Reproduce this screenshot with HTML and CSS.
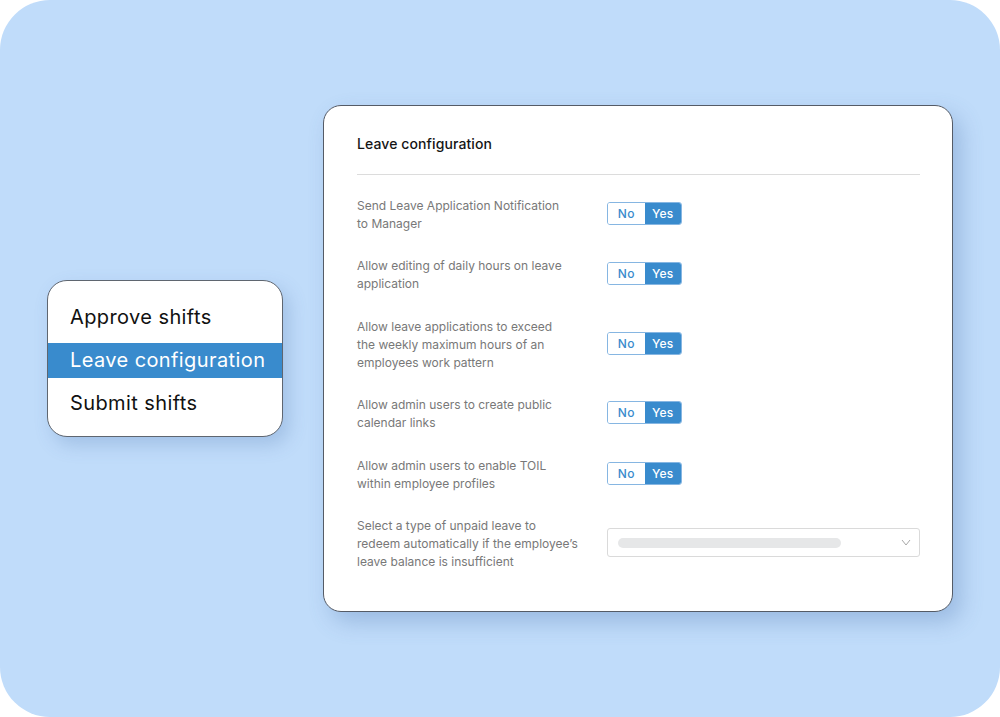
FILE: index.html
```html
<!DOCTYPE html>
<html lang="en">
<head>
    <meta charset="UTF-8">
    <title>Leave configuration</title>
    <link rel="stylesheet" href="styles.css">
</head>
<body>
    <div class="stage">
        <div class="menu">
            <div class="menu-item">Approve shifts</div>
            <div class="menu-item active">Leave configuration</div>
            <div class="menu-item">Submit shifts</div>
        </div>

        <div class="card">
            <h2>Leave configuration</h2>
            <div class="divider"></div>

            <div class="row">
                <p class="label">Send Leave Application Notification<br>to Manager</p>
                <div class="toggle"><span class="no">No</span><span class="yes">Yes</span></div>
            </div>
            <div class="row">
                <p class="label">Allow editing of daily hours on leave<br>application</p>
                <div class="toggle"><span class="no">No</span><span class="yes">Yes</span></div>
            </div>
            <div class="row">
                <p class="label">Allow leave applications to exceed<br>the weekly maximum hours of an<br>employees work pattern</p>
                <div class="toggle"><span class="no">No</span><span class="yes">Yes</span></div>
            </div>
            <div class="row">
                <p class="label">Allow admin users to create public<br>calendar links</p>
                <div class="toggle"><span class="no">No</span><span class="yes">Yes</span></div>
            </div>
            <div class="row">
                <p class="label">Allow admin users to enable TOIL<br>within employee profiles</p>
                <div class="toggle"><span class="no">No</span><span class="yes">Yes</span></div>
            </div>
            <div class="row">
                <p class="label">Select a type of unpaid leave to<br>redeem automatically if the employee’s<br>leave balance is insufficient</p>
                <div class="select">
                    <div class="placeholder"></div>
                    <svg class="chevron" width="10" height="7" viewBox="0 0 10 7"><path d="M1 1 L5 6 L9 1" fill="none" stroke="#a8a8a8" stroke-width="1"/></svg>
                </div>
            </div>
        </div>
    </div>
</body>
</html>
```

FILE: styles.css
```css
* {
    margin: 0;
    padding: 0;
    box-sizing: border-box;
    font-family: Inter, "Noto Sans", Arial, sans-serif;
}

body {
    background-color: #ffffff;
}

.stage {
    width: 1000px;
    height: 717px;
    background-color: #c0dcfa;
    border-radius: 50px;
    display: flex;
    align-items: center;
    padding-left: 47px;
    gap: 40px;
}

/* left menu */
.menu {
    width: 236px;
    background-color: #fff;
    border: 1px solid #5f6670;
    border-radius: 20px;
    padding: 19px 0 15px;
    display: flex;
    flex-direction: column;
    gap: 8px;
    box-shadow: 6px 8px 18px rgba(70, 110, 170, 0.25);
}

.menu-item {
    height: 35px;
    line-height: 35px;
    padding-left: 22px;
    font-size: 20px;
    font-weight: 400;
    letter-spacing: 0.4px;
    color: #111;
}

.menu-item.active {
    background-color: #398bcd;
    color: #fff;
}

/* settings card */
.card {
    width: 630px;
    background-color: #fff;
    border: 1px solid #555b66;
    border-radius: 18px;
    padding: 28px 32px 40px 33px;
    box-shadow: 8px 10px 22px rgba(70, 110, 170, 0.3);
}

.card h2 {
    font-size: 14px;
    font-weight: 500;
    line-height: 20px;
    letter-spacing: 0.1px;
    color: #151515;
}

.divider {
    height: 1px;
    background-color: #dcdcdc;
    margin: 20px 0 22px;
}

.row {
    display: flex;
    align-items: center;
    margin-bottom: 24.5px;
}

.row:last-child {
    margin-bottom: 0;
}

.label {
    flex: 0 0 250px;
    font-size: 12px;
    line-height: 18px;
    color: #787878;
    white-space: nowrap;
}

.toggle {
    display: flex;
    width: 75px;
    height: 23px;
    margin-bottom: 3px;
    border: 1px solid #86b6e2;
    border-radius: 3px;
    overflow: hidden;
    font-size: 12px;
    font-weight: 500;
    letter-spacing: 0.3px;
}

.toggle span {
    flex: 1;
    display: flex;
    align-items: center;
    justify-content: center;
}

.toggle .no {
    color: #398bcd;
    background-color: #fff;
}

.toggle .yes {
    color: #fff;
    background-color: #398bcd;
}

.select {
    flex: 1;
    height: 29px;
    margin-bottom: 3px;
    border: 1px solid #dadada;
    border-radius: 3px;
    display: flex;
    align-items: center;
    justify-content: space-between;
    padding: 0 8px 0 10px;
}

.placeholder {
    width: 223px;
    height: 10px;
    border-radius: 5px;
    background-color: #e6e7e8;
}
```
